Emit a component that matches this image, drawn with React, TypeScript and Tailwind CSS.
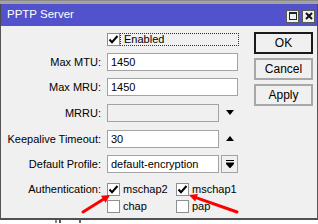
const sans = "font-['Liberation_Sans',Arial,sans-serif]";

function CheckBox({ checked }: { checked?: boolean }) {
  return (
    <div className="w-[13px] h-[13px] shrink-0 border border-[#8f8f8f] bg-white flex items-center justify-center">
      {checked && (
        <svg width="11" height="11" viewBox="0 0 11 11">
          <path d="M1.5 5.5 L4 8.2 L9.5 2" fill="none" stroke="#000" strokeWidth="2" />
        </svg>
      )}
    </div>
  );
}

function Row({ label, top, h = 18, children }: { label?: string; top: string; h?: string | number; children: React.ReactNode }) {
  return (
    <div className={`flex items-center ${top} ${h === 13 ? 'h-[13px]' : 'h-[18px]'}`}>
      <span className="w-[100px] text-right whitespace-nowrap">{label}</span>
      <div className="ml-[6px] flex items-center">{children}</div>
    </div>
  );
}

function Input({ value, wide, disabled }: { value?: string; wide?: boolean; disabled?: boolean }) {
  return (
    <div
      className={`h-[18px] border border-[#a3a3a3] pl-[3px] flex items-center ${wide ? 'w-[131px]' : 'w-[112px]'} ${
        disabled ? 'bg-[#f0f0f0]' : 'bg-white'
      }`}
    >
      {value}
    </div>
  );
}

function Btn({ label, primary }: { label: string; primary?: boolean }) {
  return (
    <div
      className={`w-[59px] h-[22px] flex items-center justify-center text-[12px] bg-[#f0f0f0] ${
        primary ? 'border-2 border-[#1a1a1a]' : 'border-2 border-[#a8a8a8]'
      }`}
    >
      {label}
    </div>
  );
}

export default function App() {
  return (
    <div className={`relative w-[318px] h-[224px] overflow-hidden bg-white text-[11px] text-black ${sans}`}>
      <div className="h-[4px] bg-[#a3a3a3] border-t border-[#8a8a8a]" />
      <div className="h-[22px] bg-[#5252cc] border-x border-[#4a4a4a] flex items-center pl-[6px] pr-[2px]">
        <span className="text-white text-[11.5px] flex-1">PPTP Server</span>
        <div className="flex gap-[3px] mt-[2px]">
          <div className="w-[13px] h-[13px] bg-[#f0f0f0] border border-[#5a5a5a] flex items-center justify-center">
            <div className="w-[8px] h-[8px] border border-[#222] border-t-2" />
          </div>
          <div className="w-[13px] h-[13px] bg-[#f0f0f0] border border-[#5a5a5a] flex items-center justify-center">
            <svg width="8" height="8" viewBox="0 0 8 8">
              <path d="M1 1 L7 7 M7 1 L1 7" stroke="#111" strokeWidth="2" />
            </svg>
          </div>
        </div>
      </div>

      <div className="h-[192px] bg-[#f0f0f0] border-x border-[#555] flex">
        <div className="w-[253px] flex flex-col">
          <Row top="mt-[7px]" h={13}>
            <div className="flex items-center">
              <CheckBox checked />
              <div className="w-[119px] h-[13px] border border-dotted border-[#333] pl-[3px] flex items-center">Enabled</div>
            </div>
          </Row>
          <Row label="Max MTU:" top="mt-[7px]">
            <Input value="1450" wide />
          </Row>
          <Row label="Max MRU:" top="mt-[7px]">
            <Input value="1450" wide />
          </Row>
          <Row label="MRRU:" top="mt-[8px]">
            <Input disabled />
            <svg className="ml-[7px]" width="8" height="6" viewBox="0 0 8 6">
              <path d="M0 0 H8 L4 5 Z" fill="#000" />
            </svg>
          </Row>
          <Row label="Keepalive Timeout:" top="mt-[8px]">
            <Input value="30" />
            <svg className="ml-[7px]" width="8" height="6" viewBox="0 0 8 6">
              <path d="M0 5 H8 L4 0 Z" fill="#000" />
            </svg>
          </Row>
          <Row label="Default Profile:" top="mt-[7px]">
            <Input value="default-encryption" />
            <div className="ml-[2px] w-[17px] h-[18px] border border-[#a3a3a3] bg-[#f0f0f0] flex items-center justify-center">
              <svg width="8" height="8" viewBox="0 0 8 8">
                <path d="M0 0.5 H8 M0 3 H8 L4 7.5 Z" stroke="#000" strokeWidth="1.2" fill="#000" />
              </svg>
            </div>
          </Row>
          <Row label="Authentication:" top="mt-[10px]" h={13}>
            <div className="w-[69px] flex items-center">
              <CheckBox checked />
              <span className="ml-[3px]">mschap2</span>
            </div>
            <CheckBox checked />
            <span className="ml-[3px]">mschap1</span>
          </Row>
          <Row top="mt-[4px]" h={13}>
            <div className="w-[69px] flex items-center">
              <CheckBox />
              <span className="ml-[3px]">chap</span>
            </div>
            <CheckBox />
            <span className="ml-[3px]">pap</span>
          </Row>
        </div>
        <div className="flex flex-col gap-[4px] pt-[6px]">
          <Btn label="OK" primary />
          <Btn label="Cancel" />
          <Btn label="Apply" />
        </div>
      </div>
      <div className="h-[2px] bg-[#505050]" />
      <div className="h-[4px] flex items-start gap-[2px] pl-[55px]">
        <div className="w-[2px] h-[3px] bg-[#888]" />
        <div className="w-[2px] h-[3px] bg-[#555]" />
        <div className="ml-[16px] w-[2px] h-[3px] bg-[#666]" />
      </div>

      <svg className="absolute inset-0 pointer-events-none" width="318" height="224" viewBox="0 0 318 224">
        <line x1="83" y1="212" x2="103" y2="199.5" stroke="#f00" strokeWidth="3" strokeLinecap="round" />
        <polygon points="110,195 105.6,202.8 100.9,195.7" fill="#f00" />
        <line x1="237" y1="212" x2="196" y2="197.6" stroke="#f00" strokeWidth="3" strokeLinecap="round" />
        <polygon points="189,195 198,194 195.2,201.6" fill="#f00" />
      </svg>
    </div>
  );
}
